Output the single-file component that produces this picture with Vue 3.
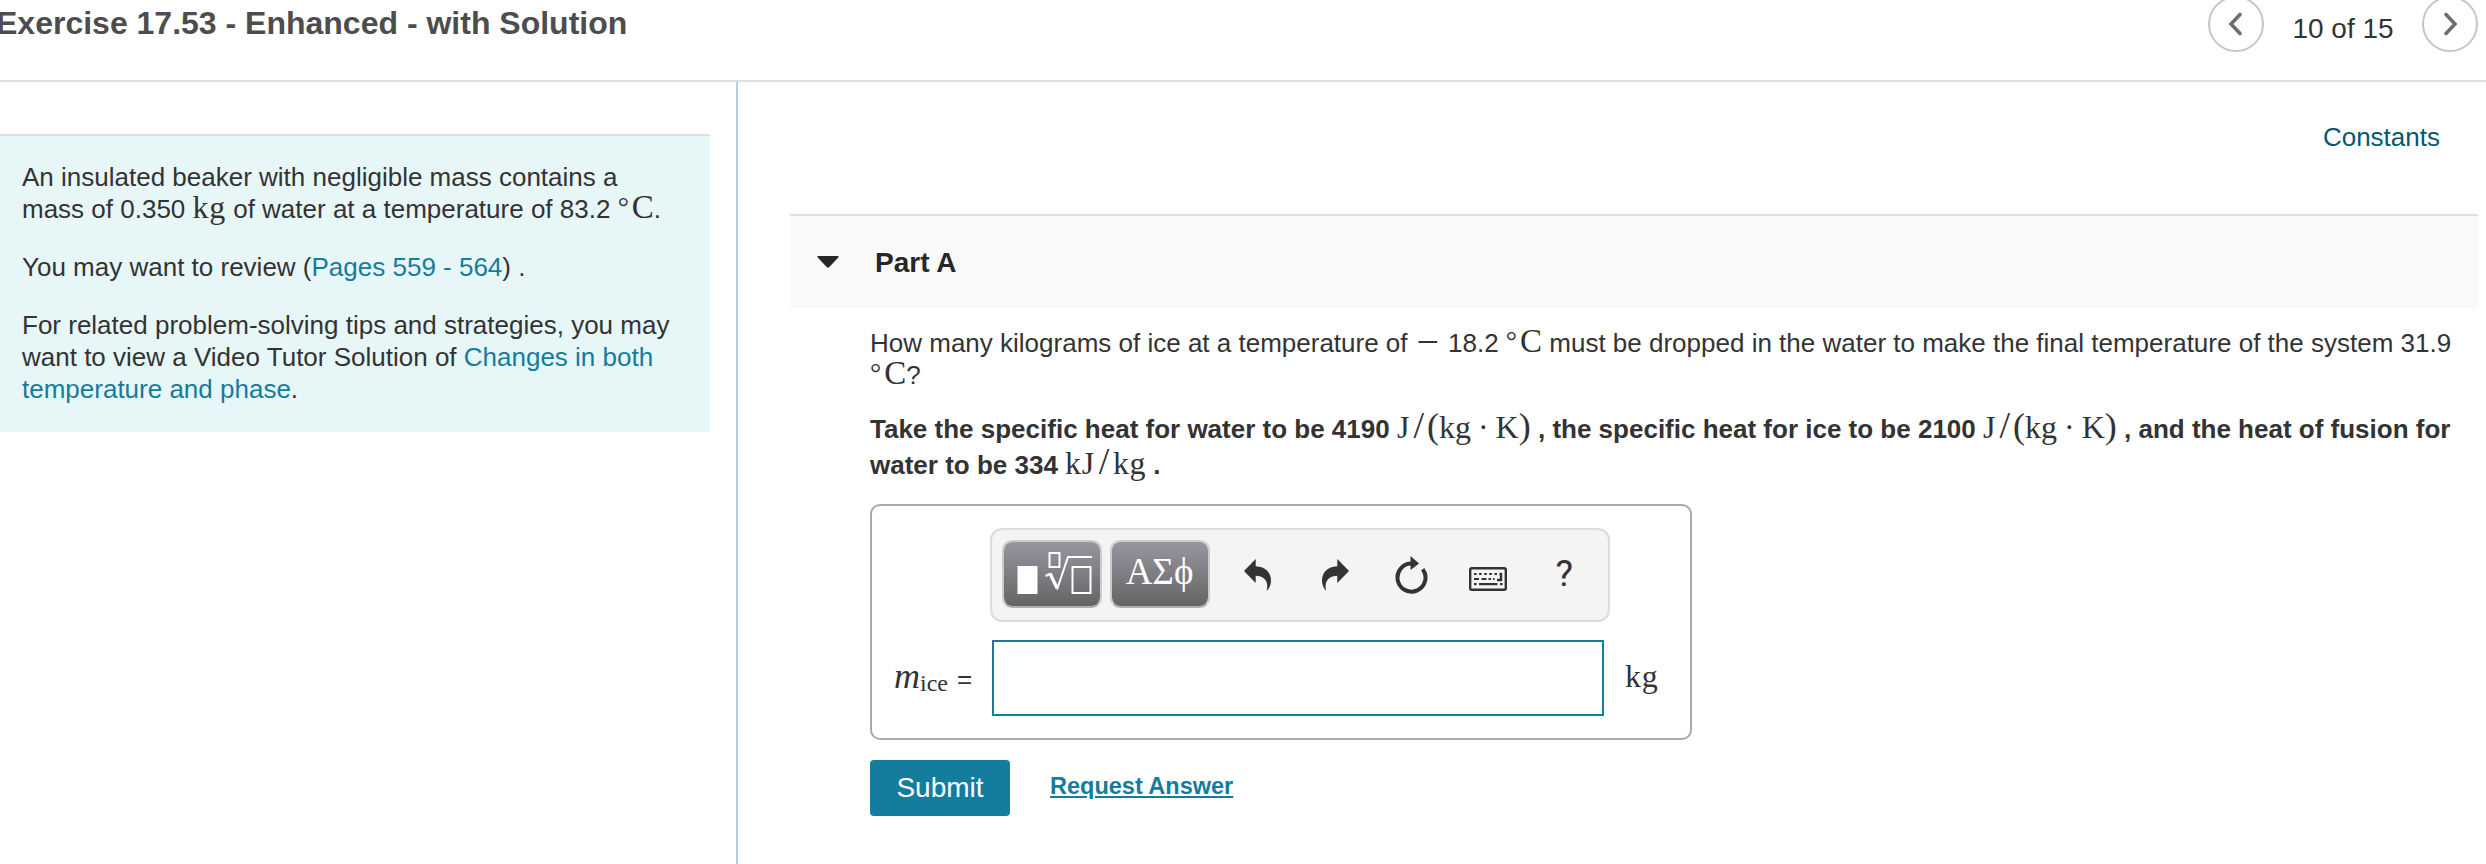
<template>
  <div class="page">
    <header class="top-bar">
      <h1>Exercise 17.53 - Enhanced - with Solution</h1>
      <nav class="pager">
        <button class="round" :disabled="current === 1" @click="go(-1)">
          <svg width="16" height="24" viewBox="0 0 16 24"><path d="M12 2.500 3 12l9 9.500" /></svg>
        </button>
        <span class="count">{{ current }} of {{ total }}</span>
        <button class="round" :disabled="current === total" @click="go(1)">
          <svg width="16" height="24" viewBox="0 0 16 24"><path d="M4 2.500 13 12 4 21.500" /></svg>
        </button>
      </nav>
    </header>

    <div class="columns">
      <aside class="left">
        <div class="intro">
          <p>
            <span class="line">An insulated beaker with negligible mass contains a</span>
            <span class="line">mass of 0.350 <span class="math kg">kg</span> of water at a temperature of 83.2 <span class="math deg"><i>°</i>C</span>.</span>
          </p>
          <p>
            <span class="line">You may want to review (<a href="#" @click.prevent>Pages 559 - 564</a>) .</span>
          </p>
          <p>
            <span class="line">For related problem-solving tips and strategies, you may</span>
            <span class="line">want to view a Video Tutor Solution of <a href="#" @click.prevent>Changes in both</a></span>
            <span class="line"><a href="#" @click.prevent>temperature and phase</a>.</span>
          </p>
        </div>
      </aside>

      <main class="right">
        <div class="constants"><a href="#" @click.prevent>Constants</a></div>
        <div class="part-bar" @click="open = !open">
          <svg width="22" height="12" viewBox="0 0 22 12"><path d="M1.5 0h19q2 0 .8 1.6L12.3 11q-1.3 1.4-2.6 0L.7 1.6Q-.5 0 1.5 0z" fill="#262626" /></svg>
          <h2>Part A</h2>
        </div>
        <div v-if="open" class="part-body">
          <p class="question">
            <span class="line">How many kilograms of ice at a temperature of <span class="math minus">−</span> 18.2 <span class="math deg"><i>°</i>C</span> must be dropped in the water to make the final temperature of the system 31.9</span>
            <span class="line"><span class="math deg"><i>°</i>C</span>?</span>
          </p>
          <p class="given">
            <span class="line">Take the specific heat for water to be 4190 <span class="math"><span class="j">J</span><span class="slash">/</span><span class="paren">(</span>kg<span class="dot">·</span>K<span class="paren">)</span></span> , the specific heat for ice to be 2100 <span class="math"><span class="j">J</span><span class="slash">/</span><span class="paren">(</span>kg<span class="dot">·</span>K<span class="paren">)</span></span> , and the heat of fusion for</span>
            <span class="line">water to be 334 <span class="math fusion">k<span class="j">J</span><span class="slash">/</span>kg</span> .</span>
          </p>

          <div class="answer-box">
            <div class="toolbar">
              <button class="palette">
                <svg width="96" height="64" viewBox="0 0 96 64" fill="none" stroke="#fff" stroke-width="2">
                  <path d="M13.500 24h20v28h-20z" fill="#fff" stroke="none" />
                  <path d="M45.500 11h10v14h-10zM68.500 25h18v26h-18z" />
                  <path d="M41.500 34l5-2.500" />
                  <path d="M46 31.500 53 46" stroke-width="3.400" />
                  <path d="M53 47.500 64 15h24" />
                </svg>
              </button>
              <button class="palette greek">ΑΣϕ</button>
              <button class="tool">
                <svg width="28" height="33" viewBox="0 0 28 33"><path d="M0 12 11.7 0v7.3C22 7.7 27 14 27 21.5c0 4.500-2 8.500-4.500 10.500 2.200-6 .8-15-10.800-15.300V24z" fill="#333" /></svg>
              </button>
              <button class="tool">
                <svg width="28" height="33" viewBox="0 0 28 33"><path d="M28 12 16.300 0v7.300C6 7.700 1 14 1 21.500c0 4.500 2 8.500 4.500 10.500-2.200-6-.8-15 10.800-15.300V24z" fill="#333" /></svg>
              </button>
              <button class="tool">
                <svg width="34" height="38" viewBox="0 0 34 38">
                  <path d="M17.500 7.600A14 14 0 1 0 28.700 13.200" fill="none" stroke="#333" stroke-width="4" />
                  <path d="M16.500 0 25 7.500 16.500 14z" fill="#333" />
                </svg>
              </button>
              <button class="tool keyboard">
                <svg width="38" height="24" viewBox="0 0 38 24" fill="none" stroke="#333">
                  <rect x="1.200" y="1.200" width="35.600" height="21.600" rx="1.500" stroke-width="2.400" />
                  <path d="M5 7h23" stroke-width="2.200" stroke-dasharray="2.600 2.500" />
                  <path d="M5 12h5M12.500 12h13" stroke-width="2.200" stroke-dasharray="5 2 2.500 2 2.500 2 2.500 2" />
                  <path d="M32 6v7h-4M30.500 7h2" stroke-width="2.400" />
                  <path d="M5 17.200h2.600M10 17.200h18.500M31 17.200h2.600" stroke-width="2.200" />
                </svg>
              </button>
              <button class="tool help">?</button>
            </div>
            <div class="entry">
              <label for="mass"><span class="var">m</span><span class="sub">ice</span><span class="eq">=</span></label>
              <input id="mass" v-model="answer" type="text" />
              <span class="answer-unit">kg</span>
            </div>
          </div>

          <div class="actions">
            <button class="submit">Submit</button>
            <a href="#" class="request" @click.prevent>Request Answer</a>
          </div>
        </div>
      </main>
    </div>
  </div>
</template>

<script setup>
import { ref } from 'vue'

const current = ref(10)
const total = 15
const open = ref(true)
const answer = ref('')

const go = step => {
  const next = current.value + step
  if (next >= 1 && next <= total) {
    current.value = next
  }
}
</script>

<style>
body {
  margin: 0;
  background: #fff;
  overflow: hidden;
}
</style>

<style scoped>
.page {
  width: 2486px;
  height: 864px;
  overflow: hidden;
  display: flex;
  flex-direction: column;
  font-family: "Liberation Sans", Arial, sans-serif;
  font-size: 26px;
  line-height: 32px;
  color: #333;
}

* {
  box-sizing: border-box;
}

h1,
h2,
p {
  margin: 0;
}

a {
  color: #147c9c;
  text-decoration: none;
}

button {
  padding: 0;
  border: 0;
  background: none;
  font-family: inherit;
  cursor: pointer;
}

.top-bar {
  height: 82px;
  flex: none;
  display: flex;
  justify-content: space-between;
  align-items: flex-start;
  border-bottom: 2px solid #dedede;
  padding-right: 8px;
}

h1 {
  margin-left: -4px;
  padding-top: 5px;
  font-size: 32px;
  line-height: 36px;
  color: #4d4d4d;
  white-space: nowrap;
}

.pager {
  display: flex;
  margin-top: -4px;
}

.round {
  width: 56px;
  height: 56px;
  border: 2px solid #c6c6c6;
  border-radius: 50%;
  display: flex;
  align-items: center;
  justify-content: center;
}

.round svg {
  fill: none;
  stroke: #6a7070;
  stroke-width: 3.6;
  stroke-linecap: round;
}

.count {
  width: 158px;
  padding-top: 17px;
  text-align: center;
  font-size: 28px;
}

.columns {
  flex: 1;
  display: flex;
}

.left {
  width: 738px;
  border-right: 2px solid #b9cce0;
  padding-top: 52px;
}

.intro {
  width: 710px;
  height: 298px;
  border-top: 2px solid #dadfdf;
  background: #e7f7f8;
  padding: 25px 0 0 22px;
}

.intro p {
  margin-bottom: 26px;
}

.line {
  display: block;
  height: 32px;
  white-space: nowrap;
}

.math {
  font-family: "Liberation Serif", "Times New Roman", serif;
  font-size: 32px;
  font-weight: normal;
  line-height: 0;
}

.kg {
  letter-spacing: 0.7px;
}

.deg {
  font-size: 33px;
}

.deg i {
  font-style: normal;
  font-size: 28px;
  vertical-align: 2px;
  margin-right: 3px;
}

.minus {
  display: inline-block;
  width: 26px;
  font-size: 40px;
  text-align: center;
  vertical-align: -3px;
}

.j {
  margin-right: 4px;
}

.slash {
  font-size: 38px;
  margin-right: 3px;
}

.paren {
  font-size: 36px;
}

.dot {
  margin: 0 7px;
}

.fusion {
  letter-spacing: 0.6px;
}

.right {
  flex: 1;
  padding: 0 8px 0 52px;
}

.constants {
  height: 132px;
  padding: 39px 38px 0 0;
  text-align: right;
}

.constants a {
  color: #005a70;
}

.part-bar {
  height: 94px;
  border-top: 2px solid #dedede;
  background: #f9f9f9;
  display: flex;
  align-items: center;
  padding-left: 27px;
  gap: 36px;
}

h2 {
  padding-top: 1px;
  font-size: 28px;
  color: #262626;
}

.part-body {
  padding: 19px 0 0 80px;
}

.given {
  padding-top: 22px;
  font-weight: bold;
}

.given .line {
  height: 36px;
}

.answer-box {
  width: 822px;
  height: 236px;
  margin-top: 19px;
  border: 2px solid #a9a9a9;
  border-radius: 10px;
  padding: 22px 0 0 22px;
}

.toolbar {
  width: 620px;
  height: 94px;
  margin-left: 96px;
  border: 2px solid #dcdcdc;
  border-radius: 12px;
  background: #f4f4f4;
  display: flex;
  align-items: center;
  padding-left: 10px;
}

.palette {
  width: 100px;
  height: 68px;
  margin: -2px 8px 0 0;
  border: 2px solid #ccc;
  border-bottom-color: #b0b0b0;
  border-radius: 10px;
  background: linear-gradient(#9896a0, #646464);
  background-clip: padding-box;
  color: #fff;
}

.palette svg {
  display: block;
}

.greek {
  margin-right: 10px;
  font-family: "Liberation Serif", serif;
  font-size: 37px;
  line-height: 56px;
  padding: 0 1px 4px 0;
}

.tool {
  width: 76.5px;
  height: 68px;
  display: flex;
  flex: none;
  align-items: center;
  justify-content: center;
  color: #333;
}

.keyboard {
  padding-top: 8px;
}

.help {
  font-family: Roboto, sans-serif;
  font-size: 37px;
  padding-bottom: 4px;
}

.entry {
  display: flex;
  align-items: center;
  margin-top: 18px;
}

label {
  width: 98px;
  white-space: nowrap;
  font-family: "Liberation Serif", serif;
}

.var {
  font-size: 36px;
  font-style: italic;
}

.sub {
  font-size: 24px;
  position: relative;
  top: 3px;
}

.eq {
  font-family: "Liberation Sans", sans-serif;
  margin-left: 9px;
}

input {
  width: 612px;
  height: 76px;
  border: 2px solid #147c9c;
  font-size: 26px;
  outline: none;
}

.answer-unit {
  font-family: "Liberation Serif", serif;
  font-size: 32px;
  letter-spacing: 0.7px;
  margin-left: 21px;
  padding-bottom: 4px;
}

.actions {
  display: flex;
  margin-top: 20px;
}

.submit {
  width: 140px;
  height: 56px;
  border-radius: 4px;
  background: #147c9c;
  color: #fff;
  font-size: 28px;
}

.request {
  margin-left: 40px;
  padding-top: 10px;
  font-size: 23.5px;
  font-weight: bold;
  text-decoration: underline;
}
</style>
